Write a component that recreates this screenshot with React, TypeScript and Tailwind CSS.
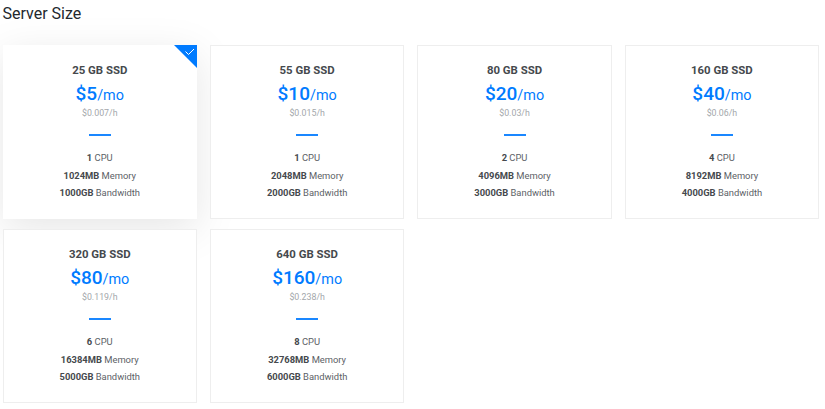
const plans = [
  { ssd: "25 GB SSD", price: "$5", hour: "$0.007/h", cpu: "1", mem: "1024MB", bw: "1000GB", selected: true },
  { ssd: "55 GB SSD", price: "$10", hour: "$0.015/h", cpu: "1", mem: "2048MB", bw: "2000GB" },
  { ssd: "80 GB SSD", price: "$20", hour: "$0.03/h", cpu: "2", mem: "4096MB", bw: "3000GB" },
  { ssd: "160 GB SSD", price: "$40", hour: "$0.06/h", cpu: "4", mem: "8192MB", bw: "4000GB" },
  { ssd: "320 GB SSD", price: "$80", hour: "$0.119/h", cpu: "6", mem: "16384MB", bw: "5000GB" },
  { ssd: "640 GB SSD", price: "$160", hour: "$0.238/h", cpu: "8", mem: "32768MB", bw: "6000GB" },
];

function Card({ p }: { p: (typeof plans)[number] }) {
  return (
    <div
      className={
        "relative h-[173.5px] flex flex-col items-center bg-white pt-[15px] border " +
        (p.selected
          ? "border-transparent shadow-[0_10px_40px_rgba(0,0,0,0.1)]"
          : "border-[#eeeeee]")
      }
    >
      {p.selected && (
        <svg className="absolute -right-px -top-px" width="23" height="23" viewBox="0 0 23 23">
          <polygon points="0,0 23,0 23,23" fill="#007bff" />
          <path d="M11.5 6.5 L14.5 9.5 L20 4" fill="none" stroke="#fff" strokeWidth="1" />
        </svg>
      )}
      <div className="text-[11.4px] leading-[18px] font-bold text-[#45494d]">{p.ssd}</div>
      <div className="mt-[1px] h-[27px] flex items-baseline text-[#007bff] leading-[28px]">
        <span className="text-[19px] font-medium">{p.price}</span>
        <span className="text-[14.4px]">/mo</span>
      </div>
      <div className="text-[8.8px] leading-[12px] text-[#a3a7ab]">{p.hour}</div>
      <div className="mt-[15px] w-[22px] h-[2px] bg-[#1a87ff]" />
      <div className="mt-[13px] text-[9.4px] leading-[18px] text-[#5c6166]">
        <span className="font-bold text-[#45494d]">{p.cpu}</span> CPU
      </div>
      <div className="text-[9.4px] leading-[18px] text-[#5c6166]">
        <span className="font-bold text-[#45494d]">{p.mem}</span> Memory
      </div>
      <div className="text-[9.4px] leading-[15px] text-[#5c6166]">
        <span className="font-bold text-[#45494d]">{p.bw}</span> Bandwidth
      </div>
    </div>
  );
}

export default function App() {
  return (
    <div className="w-[825px] h-[409px] overflow-hidden bg-white font-['Roboto',sans-serif] pl-[2.5px] pt-[3px]">
      <h2 className="text-[16px] leading-[22px] text-[#23282d] font-normal">Server Size</h2>
      <div className="mt-[20px] grid grid-cols-[194.5px_194.5px_194.5px_194.5px] gap-x-[12.9px] gap-y-[10.5px]">
        {plans.map((p) => (
          <Card key={p.ssd} p={p} />
        ))}
      </div>
    </div>
  );
}
